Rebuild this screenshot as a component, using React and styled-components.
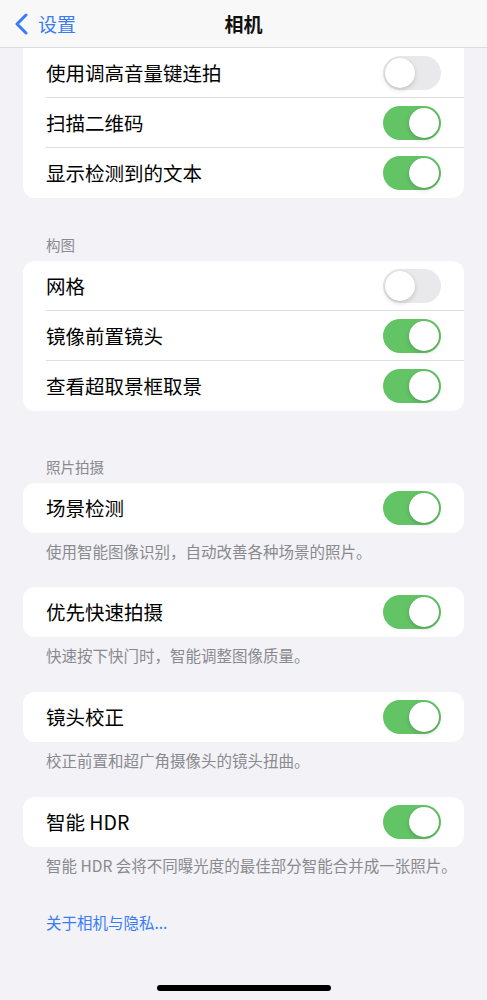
import React from 'react'
import styled, { createGlobalStyle } from 'styled-components'

const GlobalStyle = createGlobalStyle`
  html, body {
    margin: 0;
    padding: 0;
    background: #f2f2f7;
  }
  body {
    font-family: "Noto Sans CJK SC", "Noto Sans", sans-serif;
    -webkit-font-smoothing: antialiased;
  }
`

const Page = styled.div`
  width: 487px;
  height: 1000px;
  display: flex;
  flex-direction: column;
  background: #f2f2f7;
  overflow: hidden;
`

const NavBar = styled.div`
  height: 48px;
  flex: none;
  display: grid;
  grid-template-columns: 1fr auto 1fr;
  align-items: center;
  background: #f8f8f8;
  border-bottom: 1px solid #dcdcdc;
  box-sizing: border-box;
`

const BackButton = styled.div`
  display: flex;
  align-items: center;
  gap: 9px;
  padding-left: 14px;
  color: #3a7cf4;
  font-size: 19px;
  line-height: 24px;
  svg {
    display: block;
  }
`

const NavTitle = styled.div`
  font-size: 19px;
  font-weight: 700;
  line-height: 24px;
  color: #111;
`

const Content = styled.div`
  display: flex;
  flex-direction: column;
  padding: 0 23px;
`

const Section = styled.div`
  display: flex;
  flex-direction: column;
  margin-top: ${p => p.$top || 0}px;
`

const SectionHeader = styled.div`
  font-size: 14.5px;
  line-height: 20px;
  color: #8a8a8e;
  padding-left: 23px;
  margin-bottom: 6px;
`

const Card = styled.div`
  background: #fff;
  border-radius: ${p => (p.$cut ? '0 0 12px 12px' : '12px')};
  overflow: hidden;
`

const Row = styled.div`
  height: 50px;
  display: flex;
  align-items: center;
  justify-content: space-between;
  padding-left: 23px;
  position: relative;
  &:not(:last-child)::after {
    content: '';
    position: absolute;
    left: 23px;
    right: 0;
    bottom: 0;
    height: 1px;
    background: #dedee2;
  }
`

const Label = styled.div`
  font-size: 19.5px;
  line-height: 26px;
  color: #000;
`

const Track = styled.div`
  width: 58px;
  height: 34px;
  margin-right: 23px;
  border-radius: 17px;
  background: ${p => (p.$on ? '#63c466' : '#e9e9eb')};
  position: relative;
  flex: none;
`

const Knob = styled.div`
  position: absolute;
  top: 2px;
  left: ${p => (p.$on ? 26 : 2)}px;
  width: 30px;
  height: 30px;
  border-radius: 50%;
  background: #fff;
  box-shadow: 0 2px 5px rgba(0, 0, 0, 0.16), 0 0 1px rgba(0, 0, 0, 0.12);
`

const Footer = styled.div`
  font-size: 15.5px;
  line-height: 20px;
  color: #8a8a8e;
  padding-left: 23px;
  margin-top: 8px;
`

const PrivacyLink = styled.div`
  font-size: 15.5px;
  line-height: 20px;
  color: #3a7cf4;
  padding-left: 23px;
  margin-top: 37px;
`

const HomeIndicator = styled.div`
  width: 174px;
  height: 6px;
  border-radius: 3px;
  background: #000;
  margin: 53px auto 0;
`

const Toggle = ({ on }) => (
  <Track $on={on}>
    <Knob $on={on} />
  </Track>
)

const Chevron = () => (
  <svg width="15" height="22" viewBox="0 0 15 22">
    <polyline points="12,2 3,11 12,20" fill="none" stroke="#3a7cf4" strokeWidth="3" strokeLinecap="round" strokeLinejoin="round" />
  </svg>
)

const sections = [
  {
    top: 0,
    cut: true,
    rows: [
      ['使用调高音量键连拍', false],
      ['扫描二维码', true],
      ['显示检测到的文本', true],
    ],
  },
  {
    top: 37,
    header: '构图',
    rows: [
      ['网格', false],
      ['镜像前置镜头', true],
      ['查看超取景框取景', true],
    ],
  },
  {
    top: 46,
    header: '照片拍摄',
    rows: [['场景检测', true]],
    footer: '使用智能图像识别，自动改善各种场景的照片。',
  },
  {
    top: 26,
    rows: [['优先快速拍摄', true]],
    footer: '快速按下快门时，智能调整图像质量。',
  },
  {
    top: 27,
    rows: [['镜头校正', true]],
    footer: '校正前置和超广角摄像头的镜头扭曲。',
  },
  {
    top: 27,
    rows: [['智能 HDR', true]],
    footer: '智能 HDR 会将不同曝光度的最佳部分智能合并成一张照片。',
  },
]

export default function App() {
  return (
    <Page>
      <GlobalStyle />
      <NavBar>
        <BackButton>
          <Chevron />
          <span>设置</span>
        </BackButton>
        <NavTitle>相机</NavTitle>
        <div />
      </NavBar>
      <Content>
        {sections.map((s, i) => (
          <Section key={i} $top={s.top}>
            {s.header && <SectionHeader>{s.header}</SectionHeader>}
            <Card $cut={s.cut}>
              {s.rows.map(([label, on]) => (
                <Row key={label}>
                  <Label>{label}</Label>
                  <Toggle on={on} />
                </Row>
              ))}
            </Card>
            {s.footer && <Footer>{s.footer}</Footer>}
          </Section>
        ))}
        <PrivacyLink>关于相机与隐私...</PrivacyLink>
      </Content>
      <HomeIndicator />
    </Page>
  )
}
